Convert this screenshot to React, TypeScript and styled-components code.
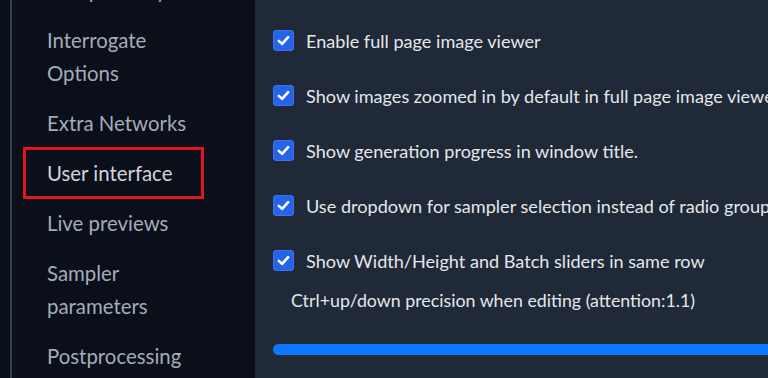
import React from "react";
import styled, { createGlobalStyle } from "styled-components";

const Global = createGlobalStyle`
  html, body { margin: 0; padding: 0; background: #0b0f19; }
  body { width: 768px; height: 378px; overflow: hidden; font-family: Lato, "Noto Sans", sans-serif; }
  #root { height: 378px; }
`;

const Page = styled.div`
  display: flex;
  height: 378px;
  width: 768px;
  overflow: hidden;
`;

const Sidebar = styled.nav`
  width: 243px;
  margin-left: 10px;
  border-left: 2px solid #374151;
  background: #0b0f19;
  overflow: hidden;
  flex-shrink: 0;
`;

const NavList = styled.ul`
  list-style: none;
  margin: -35px 0 0 12px;
  padding: 0;
  display: flex;
  flex-direction: column;
`;

const NavItem = styled.li<{ $marked?: boolean }>`
  width: 179px;
  box-sizing: border-box;
  padding: 8.5px 0 8.5px 23px;
  font-size: 20.4px;
  line-height: 33px;
  color: ${(p) => (p.$marked ? "#d1d5db" : "#a3acba")};
  outline: ${(p) => (p.$marked ? "3px solid #e0141e" : "none")};
  outline-offset: -2px;
`;

const Main = styled.main`
  flex: 1;
  background: #1f2937;
  padding: 13px 0 0 18px;
  overflow: hidden;
`;

const Row = styled.label`
  display: flex;
  align-items: center;
  gap: 12px;
  height: 55px;
  font-size: 18.1px;
  color: #e5e7eb;
  white-space: nowrap;
`;

const Box = styled.span`
  width: 21px;
  height: 21px;
  border-radius: 4px;
  background: #2563eb;
  box-shadow: inset 0 0 0 1px #3b74f0;
  display: flex;
  align-items: center;
  justify-content: center;
  flex-shrink: 0;
`;

const SliderBlock = styled.div`
  display: flex;
  flex-direction: column;
  margin-top: -3px;
`;

const SliderLabel = styled.div`
  padding-left: 18px;
  font-size: 17.8px;
  line-height: 30px;
  color: #e5e7eb;
  white-space: nowrap;
`;

const Track = styled.div`
  margin-top: 29px;
  height: 11px;
  background: #0a78ff;
  border-radius: 6px 0 0 6px;
`;

const Check = () => (
  <svg width="15" height="15" viewBox="0 0 16 16" fill="none">
    <path d="M3 8.4 L6.5 11.6 L13 4.4" stroke="#fff" strokeWidth="2.8" strokeLinecap="round" strokeLinejoin="round" />
  </svg>
);

const navItems = [
  { label: "Compatibility" },
  { label: "Interrogate Options" },
  { label: "Extra Networks" },
  { label: "User interface", marked: true },
  { label: "Live previews" },
  { label: "Sampler parameters" },
  { label: "Postprocessing" },
];

const options = [
  "Enable full page image viewer",
  "Show images zoomed in by default in full page image viewer",
  "Show generation progress in window title.",
  "Use dropdown for sampler selection instead of radio group",
  "Show Width/Height and Batch sliders in same row",
];

export default function App() {
  return (
    <>
      <Global />
      <Page>
        <Sidebar>
          <NavList>
            {navItems.map((n) => (
              <NavItem key={n.label} $marked={n.marked}>
                {n.label}
              </NavItem>
            ))}
          </NavList>
        </Sidebar>
        <Main>
          {options.map((o) => (
            <Row key={o}>
              <Box>
                <Check />
              </Box>
              {o}
            </Row>
          ))}
          <SliderBlock>
            <SliderLabel>Ctrl+up/down precision when editing (attention:1.1)</SliderLabel>
            <Track />
          </SliderBlock>
        </Main>
      </Page>
    </>
  );
}
